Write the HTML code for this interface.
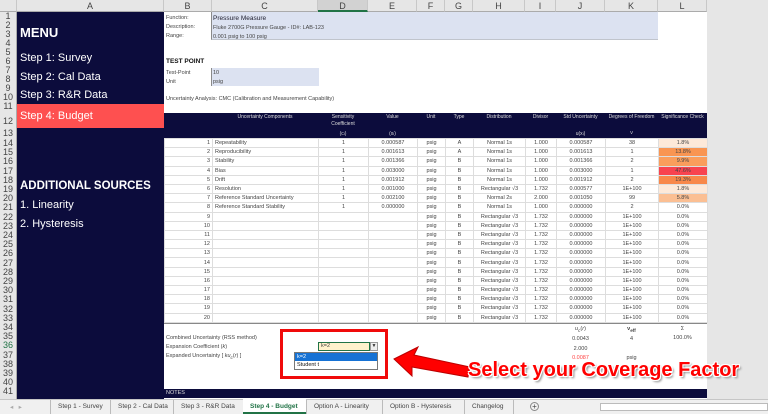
<!DOCTYPE html>
<html><head><meta charset="utf-8"><style>
*{margin:0;padding:0;box-sizing:border-box}
body{width:768px;height:414px;overflow:hidden;background:#fff;font-family:"Liberation Sans",sans-serif;position:relative}
.a{position:absolute}
.hd{top:0;height:12px;background:#e6e6e6;border-bottom:1px solid #ababab;border-right:1px solid #c8c8c8;font-size:9px;color:#444;text-align:center;line-height:12px}
.rn{left:0;width:17px;background:#e6e6e6;border-right:1px solid #ababab;font-size:9px;color:#444;text-align:center;line-height:9px}
.m{color:#fff;font-size:11px;left:20px}
.t{font-size:5.5px;color:#444;white-space:nowrap}
.h{font-size:5px;color:#ddd;text-align:center;white-space:nowrap;line-height:7px;position:absolute}
table{border-collapse:collapse;position:absolute;left:164px;top:138px;font-size:5.5px;color:#444}
td{height:9.2px;border:1px solid #ddd;padding:0 2px;text-align:center;white-space:nowrap;line-height:8px}
</style></head><body>
<div class="a hd" style="left:0;width:17px;background:#e6e6e6"></div>
<div class="a hd" style="left:17px;width:147px">A</div>
<div class="a hd" style="left:164px;width:48px">B</div>
<div class="a hd" style="left:212px;width:106px">C</div>
<div class="a hd" style="left:318px;width:50px;background:#d2d2d2;border-bottom:2px solid #217346">D</div>
<div class="a hd" style="left:368px;width:49px">E</div>
<div class="a hd" style="left:417px;width:28px">F</div>
<div class="a hd" style="left:445px;width:28px">G</div>
<div class="a hd" style="left:473px;width:52px">H</div>
<div class="a hd" style="left:525px;width:31px">I</div>
<div class="a hd" style="left:556px;width:49px">J</div>
<div class="a hd" style="left:605px;width:53px">K</div>
<div class="a hd" style="left:658px;width:49px">L</div>
<div class="a" style="left:707px;top:0;width:61px;height:399px;background:#e6e6e6"></div>
<div class="a" style="left:0;top:12px;width:17px;height:387px;background:#e6e6e6;border-right:1px solid #ababab"></div>
<div class="a rn" style="top:12px">1<br>2<br>3<br>4<br>5<br>6<br>7<br>8<br>9<br>10<br>11</div>
<div class="a rn" style="top:117px">12</div><div class="a rn" style="top:129px">13</div>
<div class="a rn" style="top:139px;line-height:9.2px">14<br>15<br>16<br>17<br>18<br>19<br>20<br>21<br>22<br>23<br>24<br>25<br>26<br>27<br>28<br>29<br>30<br>31<br>32<br>33<br>34<br>35<br><span style="color:#217346">36</span><br>37<br>38<br>39<br>40<br>41</div>
<div class="a" style="left:17px;top:12px;width:147px;height:387px;background:#0c0c3c"></div>
<div class="a" style="left:17px;top:104px;width:147px;height:24px;background:#fe5050"></div>
<div class="a m" style="top:25px;font-size:13px;font-weight:bold">MENU</div>
<div class="a m" style="top:52px">Step 1: Survey</div>
<div class="a m" style="top:71px">Step 2: Cal Data</div>
<div class="a m" style="top:89px">Step 3: R&amp;R Data</div>
<div class="a m" style="top:110px">Step 4: Budget</div>
<div class="a m" style="top:180px;font-size:11.5px;font-weight:bold">ADDITIONAL SOURCES</div>
<div class="a m" style="top:199px">1. Linearity</div>
<div class="a m" style="top:218px">2. Hysteresis</div>
<div class="a" style="left:211px;top:12px;width:447px;height:28px;background:#dce2f1;border-left:1px solid #8a8a8a;border-bottom:1px solid #c0c4cc"></div>
<div class="a t" style="left:166px;top:14px;line-height:9px">Function:<br>Description:<br>Range:</div>
<div class="a t" style="left:213px;top:14px;line-height:9px"><span style="font-size:6.5px;color:#223">Pressure Measure</span><br>Fluke 2700G Pressure Gauge - ID#: LAB-123<br>0.001 psig to 100 psig</div>
<div class="a t" style="left:166px;top:58px;font-weight:bold;font-size:6.5px;color:#111">TEST POINT</div>
<div class="a" style="left:211px;top:68px;width:108px;height:18px;background:#dce2f1;border-left:1px solid #8a8a8a"></div>
<div class="a t" style="left:166px;top:69px;line-height:9px">Test-Point<br>Unit</div>
<div class="a t" style="left:213px;top:69px;line-height:9px">10<br>psig</div>
<div class="a t" style="left:166px;top:96px">Uncertainty Analysis: CMC (Calibration and Measurement Capability)</div>
<div class="a" style="left:164px;top:113px;width:543px;height:25px;background:#0c0c3c"></div>
<div class="h" style="left:212px;width:106px;top:114px">Uncertainty Components</div>
<div class="h" style="left:318px;width:50px;top:114px">Sensitivity<br>Coefficient</div>
<div class="h" style="left:318px;width:50px;top:130px">(c<span style="font-size:4px">i</span>)</div>
<div class="h" style="left:368px;width:49px;top:114px">Value</div>
<div class="h" style="left:368px;width:49px;top:130px">(x<span style="font-size:4px">i</span>)</div>
<div class="h" style="left:417px;width:28px;top:114px">Unit</div>
<div class="h" style="left:445px;width:28px;top:114px">Type</div>
<div class="h" style="left:473px;width:52px;top:114px">Distribution</div>
<div class="h" style="left:525px;width:31px;top:114px">Divisor</div>
<div class="h" style="left:556px;width:49px;top:114px">Std Uncertainty</div>
<div class="h" style="left:556px;width:49px;top:130px">u(x<span style="font-size:4px">i</span>)</div>
<div class="h" style="left:605px;width:53px;top:114px">Degrees of Freedom</div>
<div class="h" style="left:605px;width:53px;top:130px">ν</div>
<div class="h" style="left:658px;width:49px;top:114px">Significance Check</div>
<table>
<colgroup><col style="width:48px"><col style="width:106px"><col style="width:50px"><col style="width:49px"><col style="width:28px"><col style="width:28px"><col style="width:52px"><col style="width:31px"><col style="width:49px"><col style="width:53px"><col style="width:49px"></colgroup>
<tr><td style="text-align:right">1</td><td style="text-align:left">Repeatability</td><td>1</td><td>0.000587</td><td>psig</td><td>A</td><td>Normal 1s</td><td>1.000</td><td>0.000587</td><td>38</td><td style="background:#fde9d9">1.8%</td></tr>
<tr><td style="text-align:right">2</td><td style="text-align:left">Reproducibility</td><td>1</td><td>0.001613</td><td>psig</td><td>A</td><td>Normal 1s</td><td>1.000</td><td>0.001613</td><td>1</td><td style="background:#f99552">13.8%</td></tr>
<tr><td style="text-align:right">3</td><td style="text-align:left">Stability</td><td>1</td><td>0.001366</td><td>psig</td><td>B</td><td>Normal 1s</td><td>1.000</td><td>0.001366</td><td>2</td><td style="background:#fa9d5c">9.9%</td></tr>
<tr><td style="text-align:right">4</td><td style="text-align:left">Bias</td><td>1</td><td>0.003000</td><td>psig</td><td>B</td><td>Normal 1s</td><td>1.000</td><td>0.003000</td><td>1</td><td style="background:#f8434f">47.6%</td></tr>
<tr><td style="text-align:right">5</td><td style="text-align:left">Drift</td><td>1</td><td>0.001912</td><td>psig</td><td>B</td><td>Normal 1s</td><td>1.000</td><td>0.001912</td><td>2</td><td style="background:#f8884a">19.3%</td></tr>
<tr><td style="text-align:right">6</td><td style="text-align:left">Resolution</td><td>1</td><td>0.001000</td><td>psig</td><td>B</td><td>Rectangular √3</td><td>1.732</td><td>0.000577</td><td>1E+100</td><td style="background:#fde9d9">1.8%</td></tr>
<tr><td style="text-align:right">7</td><td style="text-align:left">Reference Standard Uncertainty</td><td>1</td><td>0.002100</td><td>psig</td><td>B</td><td>Normal 2s</td><td>2.000</td><td>0.001050</td><td>99</td><td style="background:#fbbf93">5.8%</td></tr>
<tr><td style="text-align:right">8</td><td style="text-align:left">Reference Standard Stability</td><td>1</td><td>0.000000</td><td>psig</td><td>B</td><td>Normal 1s</td><td>1.000</td><td>0.000000</td><td>2</td><td>0.0%</td></tr>
<tr><td style="text-align:right">9</td><td></td><td></td><td></td><td>psig</td><td>B</td><td>Rectangular √3</td><td>1.732</td><td>0.000000</td><td>1E+100</td><td>0.0%</td></tr>
<tr><td style="text-align:right">10</td><td></td><td></td><td></td><td>psig</td><td>B</td><td>Rectangular √3</td><td>1.732</td><td>0.000000</td><td>1E+100</td><td>0.0%</td></tr>
<tr><td style="text-align:right">11</td><td></td><td></td><td></td><td>psig</td><td>B</td><td>Rectangular √3</td><td>1.732</td><td>0.000000</td><td>1E+100</td><td>0.0%</td></tr>
<tr><td style="text-align:right">12</td><td></td><td></td><td></td><td>psig</td><td>B</td><td>Rectangular √3</td><td>1.732</td><td>0.000000</td><td>1E+100</td><td>0.0%</td></tr>
<tr><td style="text-align:right">13</td><td></td><td></td><td></td><td>psig</td><td>B</td><td>Rectangular √3</td><td>1.732</td><td>0.000000</td><td>1E+100</td><td>0.0%</td></tr>
<tr><td style="text-align:right">14</td><td></td><td></td><td></td><td>psig</td><td>B</td><td>Rectangular √3</td><td>1.732</td><td>0.000000</td><td>1E+100</td><td>0.0%</td></tr>
<tr><td style="text-align:right">15</td><td></td><td></td><td></td><td>psig</td><td>B</td><td>Rectangular √3</td><td>1.732</td><td>0.000000</td><td>1E+100</td><td>0.0%</td></tr>
<tr><td style="text-align:right">16</td><td></td><td></td><td></td><td>psig</td><td>B</td><td>Rectangular √3</td><td>1.732</td><td>0.000000</td><td>1E+100</td><td>0.0%</td></tr>
<tr><td style="text-align:right">17</td><td></td><td></td><td></td><td>psig</td><td>B</td><td>Rectangular √3</td><td>1.732</td><td>0.000000</td><td>1E+100</td><td>0.0%</td></tr>
<tr><td style="text-align:right">18</td><td></td><td></td><td></td><td>psig</td><td>B</td><td>Rectangular √3</td><td>1.732</td><td>0.000000</td><td>1E+100</td><td>0.0%</td></tr>
<tr><td style="text-align:right">19</td><td></td><td></td><td></td><td>psig</td><td>B</td><td>Rectangular √3</td><td>1.732</td><td>0.000000</td><td>1E+100</td><td>0.0%</td></tr>
<tr><td style="text-align:right">20</td><td></td><td></td><td></td><td>psig</td><td>B</td><td>Rectangular √3</td><td>1.732</td><td>0.000000</td><td>1E+100</td><td>0.0%</td></tr>
</table>
<div class="a" style="left:164px;top:323px;width:543px;height:1px;background:#888"></div>
<div class="a t" style="left:166px;top:334px;line-height:9.2px">Combined Uncertainty (RSS method)<br>Expansion Coefficient (<i>k</i>)<br>Expanded Uncertainty [ <i>ku<sub>c</sub></i>(<i>r</i>) ]</div>
<div class="a t" style="left:556px;width:49px;top:325px;text-align:center;line-height:9.2px"><i>u<sub>c</sub></i>(<i>r</i>)<br>0.0043<br>2.000<br><span style="color:#f44">0.0087</span></div>
<div class="a t" style="left:605px;width:53px;top:325px;text-align:center;line-height:9.2px"><b>ν<sub>eff</sub></b><br>4<br><br>psig</div>
<div class="a t" style="left:658px;width:49px;top:325px;text-align:center;line-height:9.2px">Σ<br>100.0%</div>
<div class="a" style="left:280px;top:329px;width:108px;height:50px;border:3px solid #f00a0a"></div>
<div class="a t" style="left:318px;top:342px;width:52px;height:9px;background:#fff2cc;border:1px solid #217346;padding-left:2px;line-height:7px">k=2</div>
<div class="a" style="left:370px;top:342px;width:8px;height:9px;background:#eee;border:1px solid #999;font-size:5px;text-align:center;line-height:7px;color:#333">▼</div>
<div class="a" style="left:294px;top:352px;width:84px;height:18px;background:#fff;border:1px solid #777"></div>
<div class="a t" style="left:295px;top:353px;width:82px;height:8px;background:#1672d4;color:#fff;padding-left:2px;line-height:8px">k=2</div>
<div class="a t" style="left:295px;top:361px;padding-left:2px;line-height:8px;color:#111">Student t</div>
<svg class="a" style="left:392px;top:345px" width="80" height="40" viewBox="0 0 80 40"><path d="M2 14 L26 2 L22 10 L78 22 L76 32 L20 22 L20 31 Z" fill="#f00" stroke="#b00" stroke-width="1"/></svg>
<div class="a" style="left:468px;top:359px;font-size:20px;font-weight:bold;color:#f00;white-space:nowrap;text-shadow:-1px -1px 0 #fff,1px -1px 0 #fff,-1px 1px 0 #fff,1px 1px 0 #fff,2px 2px 2px #888">Select your Coverage Factor</div>
<div class="a t" style="left:164px;top:389px;width:543px;height:9px;background:#0c0c3c;color:#ddd;padding-left:2px;line-height:9px">NOTES</div>
<div class="a" style="left:0;top:399px;width:768px;height:15px;background:#f0f0f0;border-top:1px solid #c6c6c6;font-size:6.5px;color:#444;white-space:nowrap">
<span class="a" style="left:10px;top:3px;color:#aaa">◂ &nbsp; ▸</span>
<span class="a" style="left:50px;top:0;height:14px;border-left:1px solid #bbb;padding:3px 0 0 7px;width:60px">Step 1 - Survey</span>
<span class="a" style="left:110px;top:0;height:14px;border-left:1px solid #bbb;padding:3px 0 0 7px;width:63px">Step 2 - Cal Data</span>
<span class="a" style="left:173px;top:0;height:14px;border-left:1px solid #bbb;padding:3px 0 0 7px;width:70px">Step 3 - R&amp;R Data</span>
<span class="a" style="left:243px;top:-1px;height:15px;background:#fff;border-bottom:2px solid #217346;padding:4px 0 0 7px;width:63px;color:#217346;font-weight:bold">Step 4 - Budget</span>
<span class="a" style="left:306px;top:0;height:14px;border-left:1px solid #bbb;padding:3px 0 0 7px;width:76px">Option A - Linearity</span>
<span class="a" style="left:382px;top:0;height:14px;border-left:1px solid #bbb;padding:3px 0 0 7px;width:82px">Option B - Hysteresis</span>
<span class="a" style="left:464px;top:0;height:14px;border-left:1px solid #bbb;border-right:1px solid #bbb;padding:3px 0 0 7px;width:50px">Changelog</span>
<span class="a" style="left:530px;top:2px;width:9px;height:9px;border:1px solid #888;border-radius:50%;text-align:center;line-height:8px;font-size:8px">+</span>
<span class="a" style="left:600px;top:3px;width:168px;height:8px;background:#fff;border:1px solid #bbb"></span>
</div>
</body></html>
